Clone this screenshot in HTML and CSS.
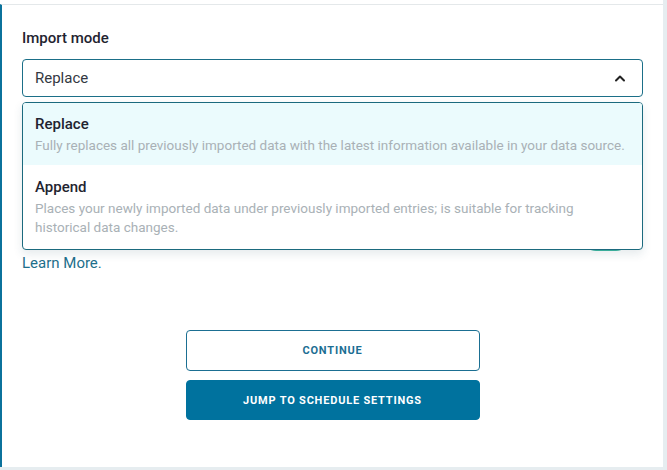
FILE: index.html
```html
<!DOCTYPE html>
<html>
<head>
<meta charset="utf-8">
<link rel="stylesheet" href="styles.css">
</head>
<body>
<div class="top-strip"></div>
<div class="card">
  <div class="field">
    <div class="label">Import mode</div>
    <div class="select-wrap">
      <div class="select">
        <span class="select-value">Replace</span>
        <svg class="chevron" width="12" height="8" viewBox="0 0 12 8"><path d="M2 6.5 L6 2.5 L10 6.5" fill="none" stroke="#222" stroke-width="2" stroke-linecap="round" stroke-linejoin="round"/></svg>
      </div>
      <div class="menu">
        <div class="option active">
          <div class="opt-title">Replace</div>
          <div class="opt-desc">Fully replaces all previously imported data with the latest information available in your data source.</div>
        </div>
        <div class="option">
          <div class="opt-title">Append</div>
          <div class="opt-desc">Places your newly imported data under previously imported entries; is suitable for tracking<br>historical data changes.</div>
        </div>
      </div>
    </div>
    <div class="hidden-row">
      <div class="toggle"></div>
    </div>
    <a class="learn">Learn More.</a>
  </div>
  <div class="actions">
    <button class="btn btn-outline">CONTINUE</button>
    <button class="btn btn-primary">JUMP TO SCHEDULE SETTINGS</button>
  </div>
</div>
</body>
</html>
```

FILE: styles.css
```css
* { box-sizing: border-box; }
html, body { margin: 0; padding: 0; }
body {
  background: #e6edf0;
  font-family: Roboto, "Noto Sans", sans-serif;
  width: 667px;
  height: 470px;
  overflow: hidden;
}
.top-strip {
  height: 4px;
  background: #ffffff;
  margin-right: 4px;
}
.card {
  background: #ffffff;
  border-top: 1px solid #e4e8ea;
  border-left: 2px solid #0b729c;
  width: 663px;
  height: 463px;
  padding: 23px 20px 0 20px;
  display: flex;
  flex-direction: column;
}
.field {
  display: flex;
  flex-direction: column;
}
.label {
  font-size: 15px;
  line-height: 20px;
  font-weight: 500;
  color: #1f2430;
}
.select-wrap {
  position: relative;
  margin-top: 11px;
}
.select {
  height: 38px;
  border: 1px solid #1b6f88;
  border-radius: 4px;
  display: flex;
  align-items: center;
  justify-content: space-between;
  padding: 0 16px 0 12px;
}
.select-value {
  font-size: 15px;
  color: #333842;
}
.chevron { display: block; }
.menu {
  position: absolute;
  left: 0;
  right: 0;
  top: 43px;
  background: #ffffff;
  border: 1px solid #1b6a7e;
  border-radius: 4px;
  box-shadow: 0 4px 10px rgba(40, 80, 100, 0.12);
  overflow: hidden;
  z-index: 5;
}
.option {
  padding: 12px 12px 10px 12px;
}
.option.active {
  background: #ebfbfd;
  height: 62px;
}
.option + .option {
  padding-top: 13px;
  padding-bottom: 12px;
}
.opt-title {
  font-size: 15px;
  line-height: 18px;
  font-weight: 500;
  color: #1f2430;
}
.opt-desc {
  margin-top: 3px;
  font-size: 13.5px;
  line-height: 19px;
  color: #a9b1b6;
  white-space: nowrap;
}
.hidden-row {
  display: flex;
  justify-content: flex-end;
  align-items: flex-end;
  height: 154px;
  padding-right: 15px;
}
.toggle {
  width: 44px;
  height: 24px;
  border-radius: 12px;
  background: #3db7a0;
}
.learn {
  font-size: 15px;
  line-height: 18px;
  color: #1d6f8c;
  margin-top: 3px;
  align-self: flex-start;
}
.actions {
  display: flex;
  flex-direction: column;
  align-items: center;
  gap: 9px;
  margin-top: 58px;
}
.btn {
  width: 294px;
  height: 41px;
  border-radius: 4px;
  font-family: Roboto, "Noto Sans", sans-serif;
  font-size: 11px;
  font-weight: 700;
  letter-spacing: 0.8px;
  cursor: pointer;
}
.btn-outline {
  background: #ffffff;
  border: 1px solid #1b6f92;
  color: #1c6e93;
}
.btn-primary {
  background: #00729e;
  border: 1px solid #00729e;
  color: #ffffff;
  height: 40px;
}
```
